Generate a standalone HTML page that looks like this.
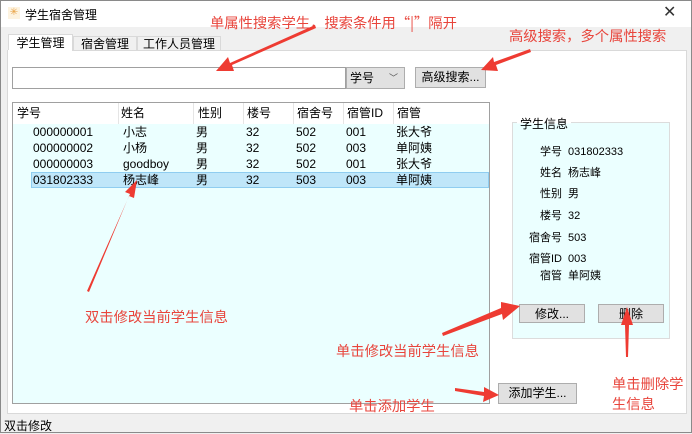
<!DOCTYPE html>
<html><head><meta charset="utf-8"><style>
*{margin:0;padding:0;box-sizing:border-box}
body{width:692px;height:433px;overflow:hidden;background:#f0f0f0;font-family:"Liberation Sans","Noto Sans CJK SC",sans-serif;font-size:12px;color:#000;position:relative}
.a{position:absolute}
.btn{position:absolute;background:#e1e1e1;border:1px solid #adadad;text-align:center;font-size:12px;line-height:18px}
.red{position:absolute;color:#e8453c;font-size:14.3px;white-space:nowrap;font-family:"Noto Sans CJK SC",sans-serif}
.row{position:absolute;left:0;height:17px;line-height:17px;width:476px}
.row span,.hd span{position:absolute}
.inf div{line-height:14px}
</style></head><body>
<div class="a" style="left:0;top:0;width:692px;height:433px;border:1px solid #8a8a8a"></div>
<div class="a" style="left:1px;top:1px;width:690px;height:26px;background:#fff"></div>
<div class="a" style="left:8px;top:7px;width:12px;height:12px;background:#fdf3e0;color:#e8a040;font-size:10px;line-height:12px;text-align:center">✳</div>
<div class="a" style="left:25px;top:6px;font-size:12px">学生宿舍管理</div>
<div class="a" style="left:663px;top:2px;font-size:16px;color:#333">✕</div>
<div class="a" style="left:8px;top:34px;width:65px;height:17px;background:#fff;border:1px solid #d9d9d9;border-bottom:none;text-align:center;line-height:16px">学生管理</div>
<div class="a" style="left:73px;top:36px;width:64px;height:15px;background:#f0f0f0;border:1px solid #d9d9d9;text-align:center;line-height:14px">宿舍管理</div>
<div class="a" style="left:137px;top:36px;width:84px;height:15px;background:#f0f0f0;border:1px solid #d9d9d9;text-align:center;line-height:14px">工作人员管理</div>
<div class="a" style="left:7px;top:50px;width:680px;height:364px;background:#fff;border:1px solid #d9d9d9"></div>
<div class="a" style="left:8px;top:50px;width:64px;height:2px;background:#fff"></div>
<div class="a" style="left:12px;top:67px;width:334px;height:22px;border:1px solid #a0a0a0;background:#fff"></div>
<div class="a" style="left:346px;top:67px;width:59px;height:22px;border:1px solid #adadad;background:#e1e1e1;line-height:20px;padding-left:3px">学号<span style="position:absolute;right:6px;top:0;font-size:9px;color:#555">﹀</span></div>
<div class="btn" style="left:415px;top:67px;width:71px;height:21px;line-height:19px">高级搜索...</div>
<div class="a" style="left:12px;top:102px;width:478px;height:302px;border:1px solid #a0a0a0;background:#ebffff">
 <div class="hd a" style="left:0;top:0;width:476px;height:21px;background:#fff;line-height:21px">
  <span style="left:4px">学号</span><span style="left:108px">姓名</span><span style="left:185px">性别</span><span style="left:234px">楼号</span><span style="left:284px">宿舍号</span><span style="left:334px">宿管ID</span><span style="left:384px">宿管</span>
  <i class="a" style="left:105px;top:0;width:1px;height:21px;background:#e5e5e5"></i><i class="a" style="left:180px;top:0;width:1px;height:21px;background:#e5e5e5"></i><i class="a" style="left:230px;top:0;width:1px;height:21px;background:#e5e5e5"></i><i class="a" style="left:280px;top:0;width:1px;height:21px;background:#e5e5e5"></i><i class="a" style="left:330px;top:0;width:1px;height:21px;background:#e5e5e5"></i><i class="a" style="left:380px;top:0;width:1px;height:21px;background:#e5e5e5"></i>
 </div>
 <div class="row" style="top:21px"><span style="left:20px">000000001</span><span style="left:110px">小志</span><span style="left:183px">男</span><span style="left:233px">32</span><span style="left:283px">502</span><span style="left:333px">001</span><span style="left:383px">张大爷</span></div>
 <div class="row" style="top:37px"><span style="left:20px">000000002</span><span style="left:110px">小杨</span><span style="left:183px">男</span><span style="left:233px">32</span><span style="left:283px">502</span><span style="left:333px">003</span><span style="left:383px">单阿姨</span></div>
 <div class="row" style="top:53px"><span style="left:20px">000000003</span><span style="left:110px">goodboy</span><span style="left:183px">男</span><span style="left:233px">32</span><span style="left:283px">502</span><span style="left:333px">001</span><span style="left:383px">张大爷</span></div>
 <div class="a" style="left:18px;top:69px;width:458px;height:16px;background:#bfe6f9;border:1px solid #8fcdf0"></div>
 <div class="row" style="top:69px"><span style="left:20px">031802333</span><span style="left:110px">杨志峰</span><span style="left:183px">男</span><span style="left:233px">32</span><span style="left:283px">503</span><span style="left:333px">003</span><span style="left:383px">单阿姨</span></div>
</div>
<div class="a" style="left:512px;top:122px;width:158px;height:217px;border:1px solid #dcdcdc;background:#ebffff"></div>
<div class="a" style="left:517px;top:115px;padding:0 3px;background:linear-gradient(#fff 50%,#ebffff 50%)">学生信息</div>
<div class="a inf" style="left:512px;top:145px;width:158px;font-size:11px">
 <div class="a" style="top:0;left:0;width:50px;text-align:right">学号</div><div class="a" style="top:0;left:56px">031802333</div>
 <div class="a" style="top:21px;left:0;width:50px;text-align:right">姓名</div><div class="a" style="top:21px;left:56px">杨志峰</div>
 <div class="a" style="top:42px;left:0;width:50px;text-align:right">性别</div><div class="a" style="top:42px;left:56px">男</div>
 <div class="a" style="top:64px;left:0;width:50px;text-align:right">楼号</div><div class="a" style="top:64px;left:56px">32</div>
 <div class="a" style="top:86px;left:0;width:50px;text-align:right">宿舍号</div><div class="a" style="top:86px;left:56px">503</div>
 <div class="a" style="top:107px;left:0;width:50px;text-align:right">宿管ID</div><div class="a" style="top:107px;left:56px">003</div>
 <div class="a" style="top:124px;left:0;width:50px;text-align:right">宿管</div><div class="a" style="top:124px;left:56px">单阿姨</div>
</div>
<div class="btn" style="left:519px;top:304px;width:66px;height:19px">修改...</div>
<div class="btn" style="left:598px;top:304px;width:66px;height:19px">删除</div>
<div class="btn" style="left:498px;top:383px;width:79px;height:21px;line-height:19px">添加学生...</div>
<div class="a" style="left:4px;top:417px;font-size:12px">双击修改</div>
<div class="red" style="left:210px;top:12px">单属性搜索学生，搜索条件用“|”隔开</div>
<div class="red" style="left:509px;top:25px">高级搜索，多个属性搜索</div>
<div class="red" style="left:85px;top:306px">双击修改当前学生信息</div>
<div class="red" style="left:336px;top:340px">单击修改当前学生信息</div>
<div class="red" style="left:349px;top:395px">单击添加学生</div>
<div class="red" style="left:612px;top:374px;line-height:20px">单击删除学<br>生信息</div>
<svg class="a" style="left:0;top:0" width="692" height="433">
<g fill="#ee3b32">
<polygon points="315,25 316,28 232,65 234,71 216,71 228,57 230,63"/>
<polygon points="530,49 531,52 496,65 498,71 481,70 493,57 494,62"/>
<polygon points="87,291 89,292 129,196 134,198 137,180 125,192 130,194"/>
<polygon points="442,333 443,336 502,314 503,320 520,306 501,302 501,308"/>
<polygon points="455,388 455,391 484,396 483,402 499,395 484,387 484,392"/>
<polygon points="626,357 628,357 629,325 633,325 627,307 621,325 625,325"/>
</g>
</svg>
</body></html>
